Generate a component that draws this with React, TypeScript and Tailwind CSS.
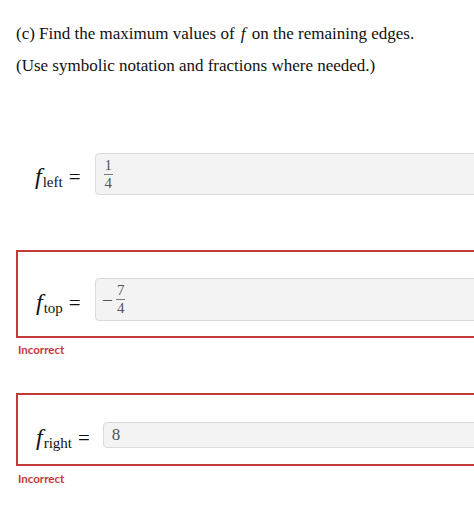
import React from "react";

const serif = { fontFamily: '"Liberation Serif", "Times New Roman", serif' };
const sans = { fontFamily: 'Lato, "Open Sans", sans-serif' };

function Frac({ n, d, neg }: { n: string; d: string; neg?: boolean }) {
  return (
    <span className="inline-flex items-center text-[#555]">
      {neg && <span className="mr-[3px] text-[20px] leading-none">−</span>}
      <span className="inline-flex flex-col items-center leading-none">
        <span className="text-[15px] leading-[15px] px-[1px]">{n}</span>
        <span className="block h-[1px] w-full bg-[#777] my-[1px]" />
        <span className="text-[15px] leading-[15px] px-[1px]">{d}</span>
      </span>
    </span>
  );
}

function Label({ sub }: { sub: string }) {
  return (
    <span className="inline-flex items-baseline text-[#111] translate-y-[2px]">
      <span className="italic text-[24px] leading-none">f</span>
      <span className="text-[15px] leading-none translate-y-[3px] ml-[1px]">{sub}</span>
      <span className="text-[21px] leading-none ml-[6px]">=</span>
    </span>
  );
}

export default function App() {
  return (
    <div className="w-[474px] h-[515px] overflow-hidden bg-white" style={serif}>
      <div className="w-[520px] pl-4">
        <p className="pt-[23px] text-[17px] leading-[22px] text-[#111]">
          (c) Find the maximum values of <span className="italic mx-[2px]">f</span> on the remaining edges.
        </p>
        <p className="mt-[10px] text-[17px] leading-[22px] text-[#111]">
          (Use symbolic notation and fractions where needed.)
        </p>

        <div className="mt-[76px] flex items-center pl-[19px]">
          <Label sub="left" />
          <div className="ml-[14px] h-[42px] flex-1 rounded-l-[4px] border-[1.5px] border-[#dadada] bg-[#f3f3f3] flex items-center pl-[8px]">
            <Frac n="1" d="4" />
          </div>
        </div>

        <div className="mt-[55px] border-2 border-[#c33a3a] pt-[26px] pb-[15px] pl-[18px]">
          <div className="flex items-center">
            <Label sub="top" />
            <div className="ml-[14px] h-[43px] flex-1 rounded-l-[4px] border-[1.5px] border-[#dadada] bg-[#f3f3f3] flex items-center pl-[6px]">
              <Frac n="7" d="4" neg />
            </div>
          </div>
        </div>
        <div className="mt-[4px] pl-[2px] text-[11.5px] leading-[16px] font-bold text-[#c33a3a]" style={sans}>
          Incorrect
        </div>

        <div className="mt-[35px] border-2 border-[#c33a3a] pt-[27px] pb-[16px] pl-[18px]">
          <div className="flex items-center">
            <Label sub="right" />
            <div className="ml-[13px] h-[26px] flex-1 rounded-l-[4px] border-[1.5px] border-[#dadada] bg-[#f3f3f3] flex items-center pl-[8px] text-[17px] text-[#555]">
              8
            </div>
          </div>
        </div>
        <div className="mt-[5px] pl-[2px] text-[11.5px] leading-[16px] font-bold text-[#c33a3a]" style={sans}>
          Incorrect
        </div>
      </div>
    </div>
  );
}
